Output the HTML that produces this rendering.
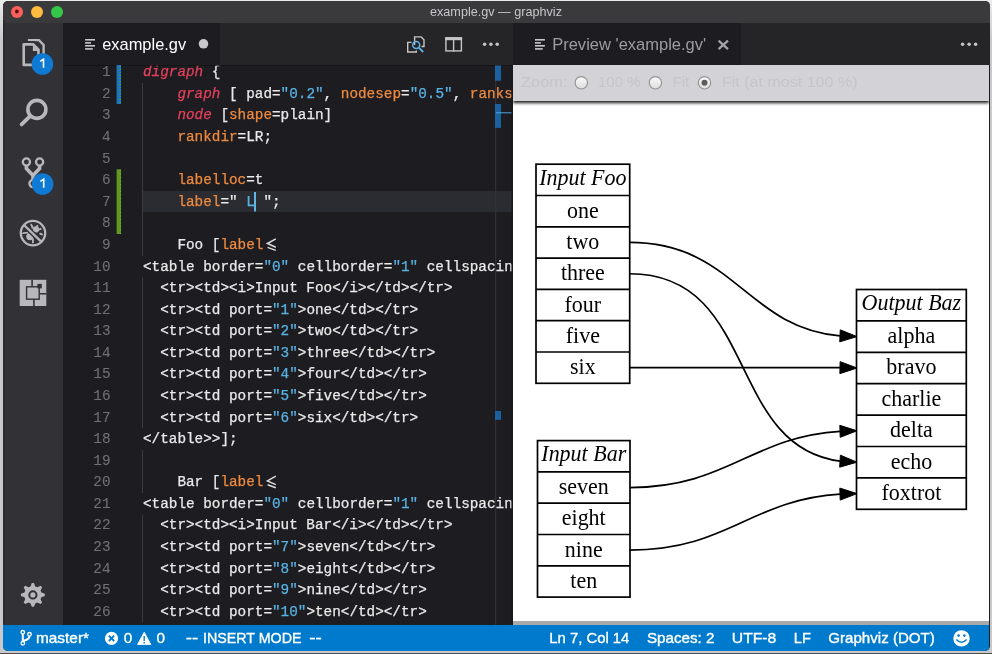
<!DOCTYPE html>
<html><head><meta charset="utf-8">
<style>
*{margin:0;padding:0;box-sizing:border-box}
html,body{width:992px;height:654px;overflow:hidden;background:linear-gradient(#ececec 0,#c9c8cb 40px,#c9c8cb 653px,#4d4d4f 653px);font-family:"Liberation Sans",sans-serif}
.a{position:absolute}
#win{left:3px;top:1px;width:987px;height:650px;border-radius:5px;overflow:hidden;background:#1d1d21}
#title{left:0;top:0;width:987px;height:22px;background:#3a393c}
.tl{width:12px;height:12px;border-radius:50%;top:5px}
#act{left:0;top:22px;width:60px;height:602px;background:#323135}
#tabs1{left:60px;top:22px;width:449.5px;height:42px;background:#252427}
#tab1{left:0;top:0;width:157px;height:42px;background:#1d1d21}
#ed{left:60px;top:64px;width:449.5px;height:560.7px;background:#1d1d21;overflow:hidden}
#code{left:80px;top:0;width:369.5px;height:560.7px;overflow:hidden}
.ln{position:absolute;left:0;width:47.5px;text-align:right;color:#707075;-webkit-text-stroke:0.1px currentColor!important}
.l{position:absolute;left:0;white-space:pre;color:#e9e9e9}
.mono{font-family:"Liberation Mono",monospace;font-size:14.33px;line-height:21.58px;-webkit-text-stroke:0.25px currentColor}
.k{color:#e4405c;font-style:italic}
.o{color:#ee8a3f}
.s{color:#58b2e3}
#curline{left:0;top:126px;width:369.5px;height:20.8px;background:#2b2c31}
#tabs2{left:510px;top:22px;width:477px;height:42px;background:#252427}
#tab2{left:0;top:0;width:228px;height:42px;background:#1d1d21}
#prev{left:510px;top:64px;width:476px;height:560.7px;background:#fff;overflow:hidden}
#zoom{left:0;top:0;width:476px;height:36.2px;background:#d3d2d6;box-shadow:0 2px 3px rgba(0,0,0,.9)}
#pbar{left:0;top:555.5px;width:476px;height:6px;background:#a9a8ab}
#status{left:0;top:623.7px;width:985.5px;height:26.3px;background:#007acc}
</style></head><body>
<div id="root" class="a" style="left:0;top:0;width:992px;height:654px;filter:opacity(0.999)">
<div id="win" class="a">
  <div id="title" class="a">
    <div class="a tl" style="left:8px;background:#fc605c"></div>
    <div class="a tl" style="left:28px;background:#fdbc40"></div>
    <div class="a tl" style="left:48px;background:#34c84a"></div>
  </div>
  <div id="act" class="a"><svg class="a" style="left:0;top:0" width="60" height="602" viewBox="3 23 60 602">
<path d="M27.9,40.1 H39 L43.6,44.9 V56" fill="none" stroke="#b8b8ba" stroke-width="2.4"/>
<path d="M23.7,44.4 H33.3 L38.5,49.6 V64.9 H23.7 Z" fill="#323135" stroke="#323135" stroke-width="6.5" stroke-linejoin="miter"/>
<path d="M23.7,44.4 H33.3 L38.5,49.6 V64.9 H23.7 Z" fill="none" stroke="#b8b8ba" stroke-width="2.6" stroke-linejoin="round"/>
<path d="M32.9,45.2 L38.8,51 H32.9 Z" fill="#b8b8ba"/>
<circle cx="42.4" cy="64" r="10.8" fill="#0e7ad3"/>
<path d="M40.2,61.4 L43.5,59.2 V67.8" fill="none" stroke="#fff" stroke-width="1.6"/>
<circle cx="36.9" cy="109.4" r="9" fill="none" stroke="#b8b8ba" stroke-width="3.6"/>
<path d="M29.6,116.6 L21.6,124.4" stroke="#b8b8ba" stroke-width="3.8" stroke-linecap="round"/>
<circle cx="26.4" cy="162" r="3.6" fill="none" stroke="#b8b8ba" stroke-width="2.3"/>
<circle cx="39.6" cy="162" r="3.6" fill="none" stroke="#b8b8ba" stroke-width="2.3"/>
<path d="M26.4,165.5 V168.5 L33,175.5 L39.6,168.5 V165.5 M33,175.5 V180" fill="none" stroke="#b8b8ba" stroke-width="3.6"/>
<circle cx="33" cy="183.6" r="3.6" fill="none" stroke="#b8b8ba" stroke-width="2.3"/>
<circle cx="42.6" cy="184" r="10.8" fill="#0e7ad3"/>
<path d="M40.4,181.4 L43.7,179.2 V187.8" fill="none" stroke="#fff" stroke-width="1.6"/>
<circle cx="33" cy="233.1" r="12.2" fill="none" stroke="#b8b8ba" stroke-width="2.3"/>
<path d="M22.4,233.8 Q22.8,232.6 28,232.6 M33,238.5 L32.8,243.3 M30.8,224.2 Q32.6,226 32.4,228.5 M37.3,225 V228.5 M38,229.8 L41.4,228.7 M39.5,233.8 Q41.6,233.4 42.4,235.2" fill="none" stroke="#b8b8ba" stroke-width="1.8"/>
<circle cx="29.9" cy="236.6" r="3.7" fill="#b8b8ba"/>
<circle cx="35.9" cy="229.4" r="3.1" fill="#b8b8ba"/>
<path d="M26,227 L39,239.6" stroke="#323135" stroke-width="5"/>
<path d="M24,225 L40.9,241.4" stroke="#b8b8ba" stroke-width="2.4"/>
<rect x="19.7" y="279.8" width="26.6" height="26.2" fill="#b8b8ba"/>
<path d="M32.1,279.8 V286.6 M33.9,299.2 V306 M39.4,293.7 H46.3" stroke="#323135" stroke-width="1.6"/>
<rect x="25.9" y="286.1" width="14" height="13.8" fill="#323135"/>
<rect x="27.3" y="287.5" width="11.2" height="11" fill="#b8b8ba"/>
<rect x="37.4" y="283.9" width="4.4" height="4.5" fill="#323135"/>
<g transform="translate(32.9,594.9)" fill="#b8b8ba">
<path fill-rule="evenodd" stroke-linejoin="round" d="M-2.35,-8.48 L-1.08,-11.95 L1.08,-11.95 L2.35,-8.48 L4.34,-7.66 L7.69,-9.21 L9.21,-7.69 L7.66,-4.34 L8.48,-2.35 L11.95,-1.08 L11.95,1.08 L8.48,2.35 L7.66,4.34 L9.21,7.69 L7.69,9.21 L4.34,7.66 L2.35,8.48 L1.08,11.95 L-1.08,11.95 L-2.35,8.48 L-4.34,7.66 L-7.69,9.21 L-9.21,7.69 L-7.66,4.34 L-8.48,2.35 L-11.95,1.08 L-11.95,-1.08 L-8.48,-2.35 L-7.66,-4.34 L-9.21,-7.69 L-7.69,-9.21 L-4.34,-7.66 Z M4.6,0 A4.6,4.6 0 1,0 -4.6,0 A4.6,4.6 0 1,0 4.6,0 Z"/><circle r="2.6"/>
</g>
</svg></div>
  <div id="tabs1" class="a"><div id="tab1" class="a"></div></div>
  <div id="ed" class="a">
<div class="ln mono" style="top:-2.70px">1</div>
<div class="ln mono" style="top:18.88px">2</div>
<div class="ln mono" style="top:40.46px">3</div>
<div class="ln mono" style="top:62.04px">4</div>
<div class="ln mono" style="top:83.62px">5</div>
<div class="ln mono" style="top:105.20px">6</div>
<div class="ln mono" style="top:126.78px">7</div>
<div class="ln mono" style="top:148.36px">8</div>
<div class="ln mono" style="top:169.94px">9</div>
<div class="ln mono" style="top:191.52px">10</div>
<div class="ln mono" style="top:213.10px">11</div>
<div class="ln mono" style="top:234.68px">12</div>
<div class="ln mono" style="top:256.26px">13</div>
<div class="ln mono" style="top:277.84px">14</div>
<div class="ln mono" style="top:299.42px">15</div>
<div class="ln mono" style="top:321.00px">16</div>
<div class="ln mono" style="top:342.58px">17</div>
<div class="ln mono" style="top:364.16px">18</div>
<div class="ln mono" style="top:385.74px">19</div>
<div class="ln mono" style="top:407.32px">20</div>
<div class="ln mono" style="top:428.90px">21</div>
<div class="ln mono" style="top:450.48px">22</div>
<div class="ln mono" style="top:472.06px">23</div>
<div class="ln mono" style="top:493.64px">24</div>
<div class="ln mono" style="top:515.22px">25</div>
<div class="ln mono" style="top:536.80px">26</div>
<div id="code" class="a">
<div id="curline" class="a"></div>
<div class="l mono" style="top:-2.70px"><span class="k">digraph</span> {</div>
<div class="l mono" style="top:18.88px">    <span class="k">graph</span> [ pad=<span class="s">&quot;0.2&quot;</span>, <span class="o">nodesep</span>=<span class="s">&quot;0.5&quot;</span>, <span class="o">ranksep</span>=<span class="s">&quot;2&quot;</span> ];</div>
<div class="l mono" style="top:40.46px">    <span class="k">node</span> [<span class="o">shape</span>=plain]</div>
<div class="l mono" style="top:62.04px">    <span class="o">rankdir</span>=LR;</div>
<div class="l mono" style="top:83.62px"></div>
<div class="l mono" style="top:105.20px">    <span class="o">labelloc</span>=t</div>
<div class="l mono" style="top:126.78px">    <span class="o">label</span>=&quot; <span class="s">L</span> &quot;;</div>
<div class="l mono" style="top:148.36px"></div>
<div class="l mono" style="top:169.94px">    Foo [<span class="o">label</span>  </div>
<div class="l mono" style="top:191.52px">&lt;table border=<span class="s">&quot;0&quot;</span> cellborder=<span class="s">&quot;1&quot;</span> cellspacing=<span class="s">&quot;0&quot;</span>&gt;</div>
<div class="l mono" style="top:213.10px">  &lt;tr&gt;&lt;td&gt;&lt;i&gt;Input Foo&lt;/i&gt;&lt;/td&gt;&lt;/tr&gt;</div>
<div class="l mono" style="top:234.68px">  &lt;tr&gt;&lt;td port=<span class="s">&quot;1&quot;</span>&gt;one&lt;/td&gt;&lt;/tr&gt;</div>
<div class="l mono" style="top:256.26px">  &lt;tr&gt;&lt;td port=<span class="s">&quot;2&quot;</span>&gt;two&lt;/td&gt;&lt;/tr&gt;</div>
<div class="l mono" style="top:277.84px">  &lt;tr&gt;&lt;td port=<span class="s">&quot;3&quot;</span>&gt;three&lt;/td&gt;&lt;/tr&gt;</div>
<div class="l mono" style="top:299.42px">  &lt;tr&gt;&lt;td port=<span class="s">&quot;4&quot;</span>&gt;four&lt;/td&gt;&lt;/tr&gt;</div>
<div class="l mono" style="top:321.00px">  &lt;tr&gt;&lt;td port=<span class="s">&quot;5&quot;</span>&gt;five&lt;/td&gt;&lt;/tr&gt;</div>
<div class="l mono" style="top:342.58px">  &lt;tr&gt;&lt;td port=<span class="s">&quot;6&quot;</span>&gt;six&lt;/td&gt;&lt;/tr&gt;</div>
<div class="l mono" style="top:364.16px">&lt;/table&gt;&gt;];</div>
<div class="l mono" style="top:385.74px"></div>
<div class="l mono" style="top:407.32px">    Bar [<span class="o">label</span>  </div>
<div class="l mono" style="top:428.90px">&lt;table border=<span class="s">&quot;0&quot;</span> cellborder=<span class="s">&quot;1&quot;</span> cellspacing=<span class="s">&quot;0&quot;</span>&gt;</div>
<div class="l mono" style="top:450.48px">  &lt;tr&gt;&lt;td&gt;&lt;i&gt;Input Bar&lt;/i&gt;&lt;/td&gt;&lt;/tr&gt;</div>
<div class="l mono" style="top:472.06px">  &lt;tr&gt;&lt;td port=<span class="s">&quot;7&quot;</span>&gt;seven&lt;/td&gt;&lt;/tr&gt;</div>
<div class="l mono" style="top:493.64px">  &lt;tr&gt;&lt;td port=<span class="s">&quot;8&quot;</span>&gt;eight&lt;/td&gt;&lt;/tr&gt;</div>
<div class="l mono" style="top:515.22px">  &lt;tr&gt;&lt;td port=<span class="s">&quot;9&quot;</span>&gt;nine&lt;/td&gt;&lt;/tr&gt;</div>
<div class="l mono" style="top:536.80px">  &lt;tr&gt;&lt;td port=<span class="s">&quot;10&quot;</span>&gt;ten&lt;/td&gt;&lt;/tr&gt;</div>
</div>
  </div>
  <div id="tabs2" class="a"><div id="tab2" class="a"></div></div>
  <div id="prev" class="a"><div id="pbar" class="a"></div><div id="zoom" class="a"></div></div>
  <div id="status" class="a"></div>
</div>
<svg class="a" style="left:0;top:0" width="992" height="654" viewBox="0 0 992 654">
<rect x="536.00" y="164.20" width="93.70" height="219.10" fill="none" stroke="#000" stroke-width="1.70"/>
<path d="M536.00,195.50 H629.70" stroke="#000" stroke-width="1.70"/>
<path d="M536.00,226.80 H629.70" stroke="#000" stroke-width="1.70"/>
<path d="M536.00,258.10 H629.70" stroke="#000" stroke-width="1.70"/>
<path d="M536.00,289.40 H629.70" stroke="#000" stroke-width="1.70"/>
<path d="M536.00,320.70 H629.70" stroke="#000" stroke-width="1.70"/>
<path d="M536.00,352.00 H629.70" stroke="#000" stroke-width="1.70"/>
<text transform="translate(582.85,184.60) scale(1,1.06)" text-anchor="middle" style="font-family:'Liberation Serif';font-size:22px;font-style:italic" fill="#000">Input Foo</text>
<text transform="translate(582.85,217.60) scale(1,1.06)" text-anchor="middle" style="font-family:'Liberation Serif';font-size:22px" fill="#000">one</text>
<text transform="translate(582.85,248.90) scale(1,1.06)" text-anchor="middle" style="font-family:'Liberation Serif';font-size:22px" fill="#000">two</text>
<text transform="translate(582.85,280.20) scale(1,1.06)" text-anchor="middle" style="font-family:'Liberation Serif';font-size:22px" fill="#000">three</text>
<text transform="translate(582.85,311.50) scale(1,1.06)" text-anchor="middle" style="font-family:'Liberation Serif';font-size:22px" fill="#000">four</text>
<text transform="translate(582.85,342.80) scale(1,1.06)" text-anchor="middle" style="font-family:'Liberation Serif';font-size:22px" fill="#000">five</text>
<text transform="translate(582.85,374.10) scale(1,1.06)" text-anchor="middle" style="font-family:'Liberation Serif';font-size:22px" fill="#000">six</text>
<rect x="537.50" y="440.60" width="92.50" height="156.50" fill="none" stroke="#000" stroke-width="1.70"/>
<path d="M537.50,471.90 H630.00" stroke="#000" stroke-width="1.70"/>
<path d="M537.50,503.20 H630.00" stroke="#000" stroke-width="1.70"/>
<path d="M537.50,534.50 H630.00" stroke="#000" stroke-width="1.70"/>
<path d="M537.50,565.80 H630.00" stroke="#000" stroke-width="1.70"/>
<text transform="translate(583.75,461.00) scale(1,1.06)" text-anchor="middle" style="font-family:'Liberation Serif';font-size:22px;font-style:italic" fill="#000">Input Bar</text>
<text transform="translate(583.75,494.00) scale(1,1.06)" text-anchor="middle" style="font-family:'Liberation Serif';font-size:22px" fill="#000">seven</text>
<text transform="translate(583.75,525.30) scale(1,1.06)" text-anchor="middle" style="font-family:'Liberation Serif';font-size:22px" fill="#000">eight</text>
<text transform="translate(583.75,556.60) scale(1,1.06)" text-anchor="middle" style="font-family:'Liberation Serif';font-size:22px" fill="#000">nine</text>
<text transform="translate(583.75,587.90) scale(1,1.06)" text-anchor="middle" style="font-family:'Liberation Serif';font-size:22px" fill="#000">ten</text>
<rect x="856.50" y="289.50" width="109.80" height="219.80" fill="none" stroke="#000" stroke-width="1.70"/>
<path d="M856.50,320.90 H966.30" stroke="#000" stroke-width="1.70"/>
<path d="M856.50,352.30 H966.30" stroke="#000" stroke-width="1.70"/>
<path d="M856.50,383.70 H966.30" stroke="#000" stroke-width="1.70"/>
<path d="M856.50,415.10 H966.30" stroke="#000" stroke-width="1.70"/>
<path d="M856.50,446.50 H966.30" stroke="#000" stroke-width="1.70"/>
<path d="M856.50,477.90 H966.30" stroke="#000" stroke-width="1.70"/>
<text transform="translate(911.40,309.90) scale(1,1.06)" text-anchor="middle" style="font-family:'Liberation Serif';font-size:22px;font-style:italic" fill="#000">Output Baz</text>
<text transform="translate(911.40,343.00) scale(1,1.06)" text-anchor="middle" style="font-family:'Liberation Serif';font-size:22px" fill="#000">alpha</text>
<text transform="translate(911.40,374.40) scale(1,1.06)" text-anchor="middle" style="font-family:'Liberation Serif';font-size:22px" fill="#000">bravo</text>
<text transform="translate(911.40,405.80) scale(1,1.06)" text-anchor="middle" style="font-family:'Liberation Serif';font-size:22px" fill="#000">charlie</text>
<text transform="translate(911.40,437.20) scale(1,1.06)" text-anchor="middle" style="font-family:'Liberation Serif';font-size:22px" fill="#000">delta</text>
<text transform="translate(911.40,468.60) scale(1,1.06)" text-anchor="middle" style="font-family:'Liberation Serif';font-size:22px" fill="#000">echo</text>
<text transform="translate(911.40,500.00) scale(1,1.06)" text-anchor="middle" style="font-family:'Liberation Serif';font-size:22px" fill="#000">foxtrot</text>
<path d="M629.70,242.45 C734.64,242.45 745.54,327.29 840.02,335.85" fill="none" stroke="#000" stroke-width="1.70"/>
<path d="M857.00,336.60 L839.75,341.85 L840.28,329.86 Z" fill="#000" stroke="#000" stroke-width="1" stroke-linejoin="miter"/>
<path d="M629.70,273.75 C758.61,273.75 725.59,446.35 840.03,461.16" fill="none" stroke="#000" stroke-width="1.70"/>
<path d="M857.00,462.20 L839.66,467.15 L840.40,455.17 Z" fill="#000" stroke="#000" stroke-width="1" stroke-linejoin="miter"/>
<path d="M629.70,367.65 C725.20,367.65 752.99,367.65 840.00,367.63" fill="none" stroke="#000" stroke-width="1.70"/>
<path d="M857.00,368.00 L839.87,373.63 L840.14,361.63 Z" fill="#000" stroke="#000" stroke-width="1" stroke-linejoin="miter"/>
<path d="M629.70,487.55 C727.82,487.55 750.80,436.84 840.01,431.30" fill="none" stroke="#000" stroke-width="1.70"/>
<path d="M857.00,430.80 L840.19,437.30 L839.83,425.31 Z" fill="#000" stroke="#000" stroke-width="1" stroke-linejoin="miter"/>
<path d="M629.70,550.15 C727.98,550.15 750.66,499.61 840.01,494.10" fill="none" stroke="#000" stroke-width="1.70"/>
<path d="M857.00,493.60 L840.19,500.10 L839.83,488.11 Z" fill="#000" stroke="#000" stroke-width="1" stroke-linejoin="miter"/>
</svg>
<svg class="a" style="left:0;top:0" width="992" height="654" viewBox="0 0 992 654"><defs><linearGradient id="rg" x1="0" y1="0" x2="0" y2="1"><stop offset="0" stop-color="#fbfbfb"/><stop offset="1" stop-color="#dcdcde"/></linearGradient></defs>
<rect x="3" y="20" width="1.6" height="604" fill="#2a2a2d"/>
<circle cx="16.9" cy="11.5" r="1.9" fill="#5a0f0c"/>
<rect x="63" y="65" width="449.5" height="1" fill="#121215" opacity="0.7"/>
<text x="430.00" y="16.10" style="font-family:'Liberation Sans';font-size:12.70px;" fill="#c6c5c8" textLength="132.00" lengthAdjust="spacingAndGlyphs">example.gv — graphviz</text>
<rect x="85.1" y="39.0" width="9.9" height="1.6" fill="#c9c9cb"/>
<rect x="85.1" y="42.1" width="5.9" height="1.6" fill="#c9c9cb"/>
<rect x="85.1" y="45.0" width="9.9" height="1.6" fill="#c9c9cb"/>
<rect x="85.1" y="48.1" width="7.7" height="1.6" fill="#c9c9cb"/>
<text x="102.20" y="49.80" style="font-family:'Liberation Sans';font-size:16.20px;" fill="#ffffff" textLength="84.00" lengthAdjust="spacingAndGlyphs">example.gv</text>
<circle cx="203.5" cy="43.8" r="4.8" fill="#c8c8ca"/>
<path d="M414.6,45 V36.9 H421.2 L424,39.7 V46.5 H421.5" fill="none" stroke="#c5c5c7" stroke-width="1.4"/>
<path d="M411.5,42.4 H407.7 V52 H416.3 V50.5" fill="none" stroke="#c5c5c7" stroke-width="1.4"/>
<circle cx="416.2" cy="45" r="3.5" fill="none" stroke="#5fb4e8" stroke-width="1.5"/>
<path d="M418.8,47.6 L423.2,52" stroke="#5fb4e8" stroke-width="1.8"/>
<rect x="445.9" y="37.9" width="15.5" height="13" fill="none" stroke="#c5c5c7" stroke-width="1.4"/>
<rect x="445.2" y="37.2" width="16.9" height="3" fill="#c5c5c7"/>
<rect x="452.9" y="37.2" width="1.4" height="14.4" fill="#c5c5c7"/>
<circle cx="484.6" cy="44.2" r="1.75" fill="#c5c5c7"/>
<circle cx="490.9" cy="44.2" r="1.75" fill="#c5c5c7"/>
<circle cx="497.2" cy="44.2" r="1.75" fill="#c5c5c7"/>
<rect x="535" y="39.0" width="9.9" height="1.6" fill="#c9c9cb"/>
<rect x="535" y="42.1" width="5.9" height="1.6" fill="#c9c9cb"/>
<rect x="535" y="45.0" width="9.9" height="1.6" fill="#c9c9cb"/>
<rect x="535" y="48.1" width="7.7" height="1.6" fill="#c9c9cb"/>
<text x="552.20" y="50.20" style="font-family:'Liberation Sans';font-size:16.30px;" fill="#9d9c9f" textLength="154.00" lengthAdjust="spacingAndGlyphs">Preview &#x27;example.gv&#x27;</text>
<path d="M718.6,40.6 L728,49.2 M728,40.6 L718.6,49.2" stroke="#a3a2a5" stroke-width="2.3"/>
<circle cx="962.6" cy="44.2" r="1.75" fill="#c5c5c7"/>
<circle cx="969.1" cy="44.2" r="1.75" fill="#c5c5c7"/>
<circle cx="975.6" cy="44.2" r="1.75" fill="#c5c5c7"/>
<rect x="116.6" y="65" width="4.4" height="39" fill="#1d74bb"/>
<path d="M120.2,66 V104" stroke="#48b83a" stroke-width="1" stroke-dasharray="1 2"/>
<rect x="116.6" y="169.3" width="4.4" height="64.7" fill="#5f9720"/>
<path d="M120.4,170 V234" stroke="#8cc23a" stroke-width="0.8" stroke-dasharray="1 2.5"/>
<rect x="142" y="83.08" width="1" height="172.64" fill="#3b3c41"/>
<rect x="142" y="277.30" width="1" height="151.06" fill="#3b3c41"/>
<rect x="142" y="449.94" width="1" height="43.16" fill="#3b3c41"/>
<rect x="142" y="514.68" width="1" height="107.90" fill="#3b3c41"/>
<path d="M275.8,238.84 L267.4,243.54 L275.8,247.24 M267.6,247.34 L275.8,250.34" fill="none" stroke="#dedede" stroke-width="1.5"/>
<path d="M275.8,476.22 L267.4,480.92 L275.8,484.62 M267.6,484.72 L275.8,487.72" fill="none" stroke="#dedede" stroke-width="1.5"/>
<rect x="254" y="192" width="2" height="19.5" fill="#5fb4e8"/>
<rect x="495.2" y="65" width="1" height="559.7" fill="#35363b"/>
<rect x="495" y="65.5" width="6" height="15.3" fill="#1a629f"/>
<rect x="495" y="104.0" width="6" height="23.9" fill="#1a629f"/>
<rect x="495" y="411.0" width="6" height="8.8" fill="#1a629f"/>
<rect x="496" y="112.3" width="16.5" height="1" fill="#4aa7e6"/>
<rect x="511.5" y="65" width="1.5" height="559.7" fill="#19191c"/>
<text x="521.00" y="87.40" style="font-family:'Liberation Sans';font-size:14.60px;" fill="#c6c5c9" textLength="46.50" lengthAdjust="spacingAndGlyphs">Zoom:</text>
<circle cx="581.3" cy="82.8" r="6.2" fill="url(#rg)" stroke="#949396" stroke-width="1.2"/>
<circle cx="655.4" cy="82.8" r="6.2" fill="url(#rg)" stroke="#949396" stroke-width="1.2"/>
<circle cx="704.5" cy="82.8" r="6.2" fill="url(#rg)" stroke="#949396" stroke-width="1.2"/>
<circle cx="704.5" cy="82.8" r="3" fill="#5c5c5f"/>
<text x="598.00" y="87.40" style="font-family:'Liberation Sans';font-size:14.60px;" fill="#c6c5c9" textLength="42.50" lengthAdjust="spacingAndGlyphs">100 %</text>
<text x="672.60" y="87.40" style="font-family:'Liberation Sans';font-size:14.60px;" fill="#c6c5c9" textLength="16.50" lengthAdjust="spacingAndGlyphs">Fit</text>
<text x="722.00" y="87.40" style="font-family:'Liberation Sans';font-size:14.60px;" fill="#c6c5c9" textLength="135.50" lengthAdjust="spacingAndGlyphs">Fit (at most 100 %)</text>
<circle cx="22.8" cy="632.3" r="1.8" fill="none" stroke="#ffffff" stroke-width="1.3"/>
<circle cx="22.8" cy="643.3" r="1.8" fill="none" stroke="#ffffff" stroke-width="1.3"/>
<circle cx="29.5" cy="634.3" r="1.8" fill="none" stroke="#ffffff" stroke-width="1.3"/>
<path d="M22.8,634.1 V641.5 M29.5,636.1 C29.5,639.5 26,640 23.3,641" fill="none" stroke="#ffffff" stroke-width="2"/>
<text x="36.00" y="642.70" style="font-family:'Liberation Sans';font-size:14.80px;" fill="#ffffff" stroke="#ffffff" stroke-width="0.35" textLength="53.00" lengthAdjust="spacingAndGlyphs">master*</text>
<circle cx="111.5" cy="638.3" r="6.6" fill="#ffffff"/>
<path d="M108.8,635.6 L114.2,641 M114.2,635.6 L108.8,641" stroke="#007acc" stroke-width="1.8"/>
<text x="123.80" y="642.70" style="font-family:'Liberation Sans';font-size:14.80px;" fill="#ffffff" stroke="#ffffff" stroke-width="0.35" textLength="8.50" lengthAdjust="spacingAndGlyphs">0</text>
<path d="M144.2,632.2 L150.9,644.5 H137.5 Z" fill="#ffffff" stroke="#ffffff" stroke-width="0.8" stroke-linejoin="round"/>
<rect x="143.5" y="636" width="1.4" height="5" fill="#007acc"/><rect x="143.5" y="642" width="1.4" height="1.5" fill="#007acc"/>
<text x="156.40" y="642.70" style="font-family:'Liberation Sans';font-size:14.80px;" fill="#ffffff" stroke="#ffffff" stroke-width="0.35" textLength="8.50" lengthAdjust="spacingAndGlyphs">0</text>
<text x="185.80" y="642.70" style="font-family:'Liberation Sans';font-size:14.80px;" fill="#ffffff" stroke="#ffffff" stroke-width="0.35" textLength="12.50" lengthAdjust="spacingAndGlyphs">--</text>
<text x="203.00" y="642.70" style="font-family:'Liberation Sans';font-size:14.80px;" fill="#ffffff" stroke="#ffffff" stroke-width="0.35" textLength="98.50" lengthAdjust="spacingAndGlyphs">INSERT MODE</text>
<text x="309.20" y="642.70" style="font-family:'Liberation Sans';font-size:14.80px;" fill="#ffffff" stroke="#ffffff" stroke-width="0.35" textLength="12.50" lengthAdjust="spacingAndGlyphs">--</text>
<text x="549.30" y="642.70" style="font-family:'Liberation Sans';font-size:14.80px;" fill="#ffffff" stroke="#ffffff" stroke-width="0.35" textLength="80.00" lengthAdjust="spacingAndGlyphs">Ln 7, Col 14</text>
<text x="647.00" y="642.70" style="font-family:'Liberation Sans';font-size:14.80px;" fill="#ffffff" stroke="#ffffff" stroke-width="0.35" textLength="67.50" lengthAdjust="spacingAndGlyphs">Spaces: 2</text>
<text x="731.80" y="642.70" style="font-family:'Liberation Sans';font-size:14.80px;" fill="#ffffff" stroke="#ffffff" stroke-width="0.35" textLength="44.50" lengthAdjust="spacingAndGlyphs">UTF-8</text>
<text x="793.80" y="642.70" style="font-family:'Liberation Sans';font-size:14.80px;" fill="#ffffff" stroke="#ffffff" stroke-width="0.35" textLength="17.00" lengthAdjust="spacingAndGlyphs">LF</text>
<text x="828.30" y="642.70" style="font-family:'Liberation Sans';font-size:14.80px;" fill="#ffffff" stroke="#ffffff" stroke-width="0.35" textLength="106.50" lengthAdjust="spacingAndGlyphs">Graphviz (DOT)</text>
<circle cx="961.5" cy="638.4" r="8.2" fill="#ffffff"/>
<circle cx="958.6" cy="635.6" r="1.3" fill="#007acc"/><circle cx="964.4" cy="635.6" r="1.3" fill="#007acc"/>
<path d="M956.4,639.4 Q961.5,645.2 966.6,639.4" fill="none" stroke="#007acc" stroke-width="1.5"/>
</svg>
</div>
</body></html>
